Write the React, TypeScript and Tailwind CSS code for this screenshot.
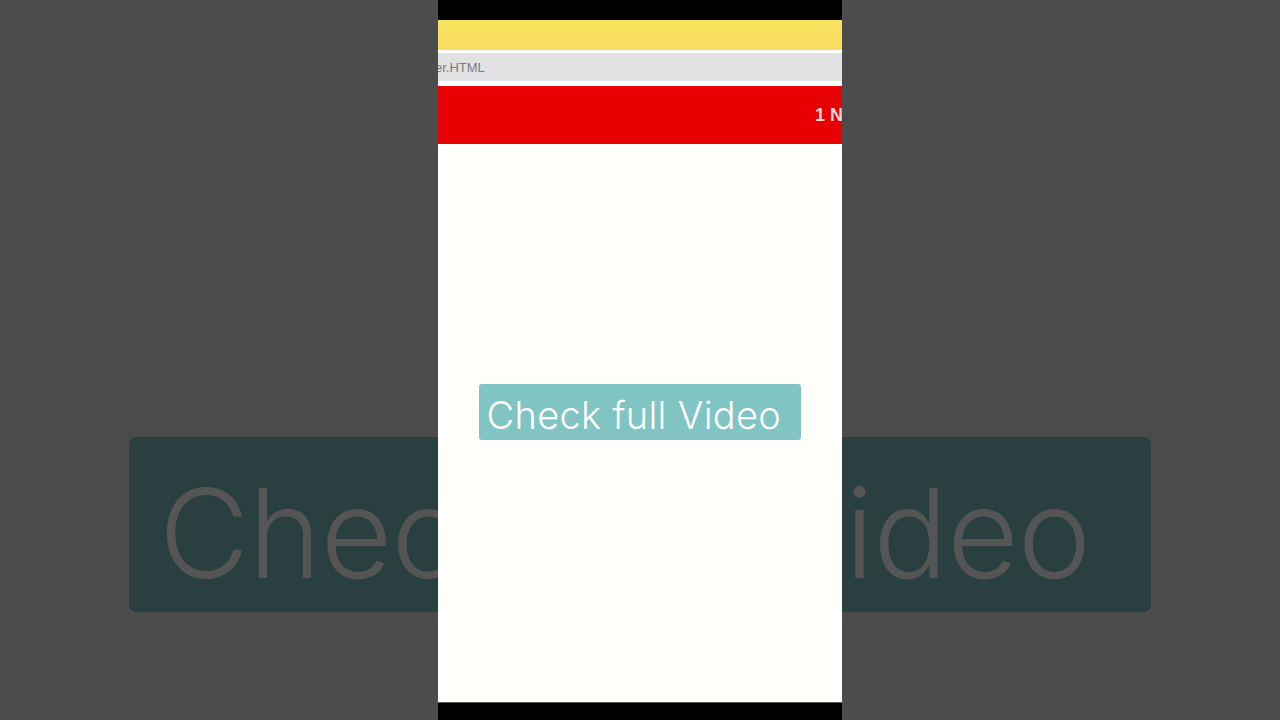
import React from 'react';

const FONT = { fontFamily: 'Inter, "Open Sans", sans-serif' };

export default function App() {
  return (
    <div className="relative w-[1280px] h-[720px] overflow-hidden bg-[#4c4c4c]" style={FONT}>
      {/* dimmed enlarged backdrop */}
      <div className="flex flex-col pt-[437px] pl-[129px]">
        <div className="w-[1022px] h-[175px] rounded-[7px] bg-[#2a3f3f] flex items-center pl-[30px] pt-[16px]">
          <span className="text-[124px] font-light leading-none text-[#555555] tracking-[-0.9px] whitespace-nowrap">
            Check full Video
          </span>
        </div>
      </div>

      {/* phone video frame */}
      <div className="absolute top-0 left-[438px] w-[404px] h-[720px] flex flex-col overflow-hidden bg-black">
        <div className="h-[20px] bg-black" />
        <div className="h-[30px] bg-gradient-to-b from-[#fae35e] to-[#f8dd62]" />
        <div className="h-[3px] bg-white" />
        <div className="h-[28px] bg-[#e2e2e4] flex items-center">
          <span className="text-[13px] text-[#7a7a7a] -ml-[3px] pt-[1px]" style={{ fontFamily: '"Liberation Sans", Arial, sans-serif' }}>
            er.HTML
          </span>
        </div>
        <div className="h-[5px] bg-white" />
        <div className="h-[58px] bg-[#e60000] flex items-center justify-end">
          <span
            className="text-[18px] font-bold text-[#f2d6d6] whitespace-nowrap -mr-[1px]"
            style={{ fontFamily: '"Liberation Sans", Arial, sans-serif' }}
          >
            1 N
          </span>
        </div>
        <div className="flex-1 bg-[#fffffc] flex flex-col items-center pt-[240px]">
          <div className="w-[322px] h-[56px] rounded-[3px] bg-[#80c5c3] flex items-center pl-[8px] mr-[1px]">
            <span className="text-[38px] font-light leading-none text-white tracking-[0.3px] whitespace-nowrap pt-[5px]">
              Check full Video
            </span>
          </div>
        </div>
        <div className="h-[18px] bg-black border-t border-[#555555]" />
      </div>
    </div>
  );
}
